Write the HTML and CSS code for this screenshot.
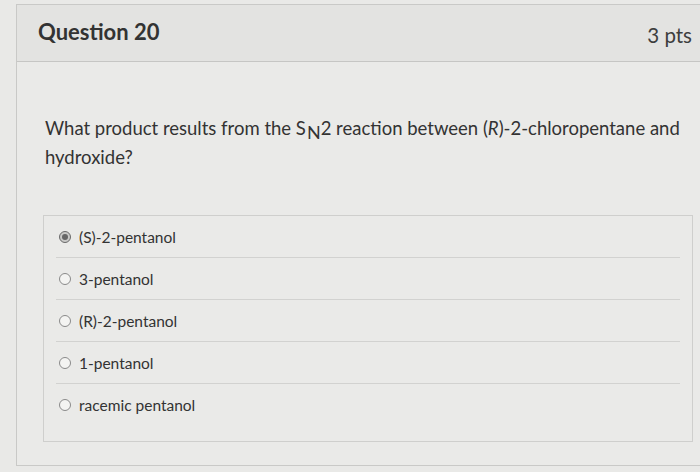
FILE: index.html
```html
<!DOCTYPE html>
<html>
<head>
<meta charset="utf-8">
<link rel="stylesheet" href="styles.css">
</head>
<body>
<div class="card">
  <div class="header">
    <h2 class="title">Question 20</h2>
    <span class="pts">3 pts</span>
  </div>
  <div class="content">
    <p class="question">What product results from the S<span class="sub">N</span>2 reaction between (<i>R</i>)-2-chloropentane and hydroxide?</p>
    <div class="answers">
      <div class="row"><span class="radio checked"></span><span class="label">(S)-2-pentanol</span></div>
      <div class="row"><span class="radio"></span><span class="label">3-pentanol</span></div>
      <div class="row"><span class="radio"></span><span class="label">(R)-2-pentanol</span></div>
      <div class="row"><span class="radio"></span><span class="label">1-pentanol</span></div>
      <div class="row"><span class="radio"></span><span class="label">racemic pentanol</span></div>
    </div>
  </div>
</div>
</body>
</html>
```

FILE: styles.css
```css
html, body {
  margin: 0;
  padding: 0;
}
body {
  background: #e9e9e7;
  font-family: Lato, "Open Sans", sans-serif;
  color: #3a3a3a;
  width: 700px;
  height: 472px;
  overflow: hidden;
  padding-top: 4px;
  padding-left: 16px;
  box-sizing: border-box;
}
.card {
  width: 684px;
  height: 462px;
  border: 1px solid #c9c9c7;
  border-right: none;
  box-sizing: border-box;
  background: #eaeae8;
}
.header {
  height: 57px;
  background: #e3e3e1;
  border-bottom: 1px solid #c6c6c4;
  display: flex;
  align-items: center;
  justify-content: space-between;
  padding: 0 8px 0 21px;
  box-sizing: border-box;
}
.title {
  margin: 0;
  font-size: 22px;
  font-weight: 700;
  color: #333;
  padding-bottom: 4px;
}
.pts {
  font-size: 20.5px;
  color: #3d3d3d;
  padding-top: 4px;
}
.content {
  padding: 52px 0 0 28px;
}
.question {
  margin: 0;
  font-size: 18.5px;
  line-height: 29px;
  color: #333;
  width: 645px;
}
.question .sub {
  position: relative;
  top: 4px;
  font-size: 18px;
  margin-left: 1px;
}
.answers {
  margin-top: 43px;
  width: 650px;
  height: 227px;
  border: 1px solid #cfcfcd;
  box-sizing: border-box;
  margin-left: -2px;
  padding: 0 12px;
}
.row {
  height: 42px;
  border-bottom: 1px solid #d2d2d0;
  display: flex;
  align-items: center;
  padding-left: 3px;
  box-sizing: border-box;
}
.row:last-child {
  border-bottom: none;
}
.radio {
  width: 12px;
  height: 12px;
  border: 1.5px solid #8a8a8a;
  border-radius: 50%;
  background: #f4f4f2;
  margin-right: 8px;
  display: flex;
  align-items: center;
  justify-content: center;
  flex: none;
  box-sizing: border-box;
}
.radio.checked {
  background: #c9c9c7;
  border-color: #6a6a6a;
}
.radio.checked::after {
  content: "";
  width: 6px;
  height: 6px;
  border-radius: 50%;
  background: #666;
}
.label {
  font-size: 15.5px;
  color: #333;
}
```
